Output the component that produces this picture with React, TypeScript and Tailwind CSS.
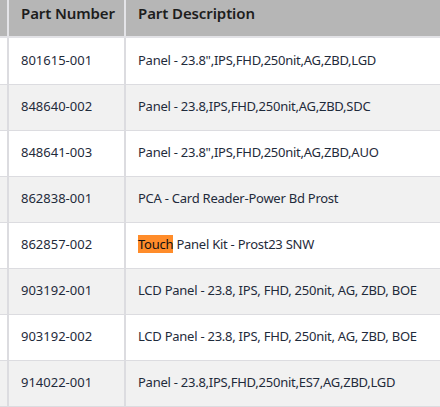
const rows: { pn: string; desc: string; hl?: string }[] = [
  { pn: '801615-001', desc: 'Panel - 23.8",IPS,FHD,250nit,AG,ZBD,LGD' },
  { pn: '848640-002', desc: 'Panel - 23.8,IPS,FHD,250nit,AG,ZBD,SDC' },
  { pn: '848641-003', desc: 'Panel - 23.8",IPS,FHD,250nit,AG,ZBD,AUO' },
  { pn: '862838-001', desc: 'PCA - Card Reader-Power Bd Prost' },
  { pn: '862857-002', desc: ' Panel Kit - Prost23 SNW', hl: 'Touch' },
  { pn: '903192-001', desc: 'LCD Panel - 23.8, IPS, FHD, 250nit, AG, ZBD, BOE' },
  { pn: '903192-002', desc: 'LCD Panel - 23.8, IPS, FHD, 250nit, AG, ZBD, BOE' },
  { pn: '914022-001', desc: 'Panel - 23.8,IPS,FHD,250nit,ES7,AG,ZBD,LGD' },
];

export default function App() {
  return (
    <div className="h-[407px] w-[440px] overflow-hidden bg-white font-['Noto_Sans',sans-serif]">
      <table className="w-full table-fixed border-collapse text-[13px]">
        <colgroup>
          <col className="w-[8px]" />
          <col className="w-[117px]" />
          <col />
        </colgroup>
        <thead>
          <tr className="h-[36px] bg-[#b6b6b6] text-left text-[15px] font-semibold text-[#1d1d1d]">
            <th className="border-r-2 border-[#e4e4e8] p-0" />
            <th className="whitespace-nowrap border-r-2 border-[#e4e4e8] px-3 pt-[2px] pb-[10px] align-top font-semibold tracking-[-0.1px]">
              Part Number
            </th>
            <th className="whitespace-nowrap px-3 pt-[2px] pb-[10px] align-top font-semibold tracking-[-0.1px]">
              Part Description
            </th>
          </tr>
          <tr className="h-[2px] bg-[#e2e2e6]">
            <th colSpan={3} className="p-0" />
          </tr>
        </thead>
        <tbody className="text-[#1f2b3b]">
          {rows.map((r, i) => (
            <tr
              key={i}
              className={`h-[46px] border-b border-[#dcdce0] ${i % 2 === 0 ? 'bg-white' : 'bg-[#f1f1f1]'}`}
            >
              <td className="border-r-2 border-[#dcdce0] p-0" />
              <td className="border-r-2 border-[#dcdce0] px-3">{r.pn}</td>
              <td className="whitespace-nowrap px-3 tracking-[-0.25px]">
                {r.hl && <span className="bg-[#ff8c2a] text-[#111]">{r.hl}</span>}
                {r.desc}
              </td>
            </tr>
          ))}
        </tbody>
      </table>
    </div>
  );
}
